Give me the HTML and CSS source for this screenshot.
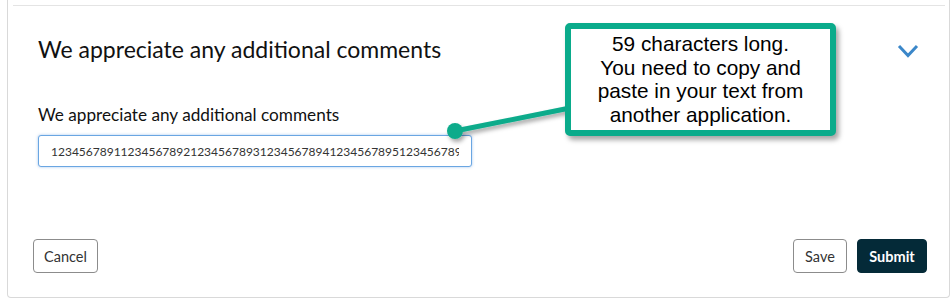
FILE: index.html
```html
<!DOCTYPE html>
<html lang="en">
<head>
<meta charset="utf-8">
<title>Comments</title>
<link rel="stylesheet" href="styles.css">
</head>
<body>
<div class="card">
  <div class="divider"></div>
  <div class="section">
    <div class="head">
      <h2 class="title">We appreciate any additional comments</h2>
      <svg class="chevron" width="22" height="16" viewBox="0 0 22 16" aria-hidden="true"><path d="M2 3 L11 12.5 L20 3" fill="none" stroke="#3b87c9" stroke-width="3"/></svg>
    </div>
    <label class="label" for="comments">We appreciate any additional comments</label>
    <input class="field" id="comments" type="text" value="12345678911234567892123456789312345678941234567895123456789">
  </div>
  <div class="actions">
    <button class="btn cancel">Cancel</button>
    <div class="group">
      <button class="btn save">Save</button>
      <button class="btn primary">Submit</button>
    </div>
  </div>
</div>
<svg class="connector" width="952" height="304" viewBox="0 0 952 304" aria-hidden="true">
  <defs>
    <filter id="sh" x="-20%" y="-50%" width="140%" height="200%">
      <feDropShadow dx="2" dy="3" stdDeviation="2" flood-color="#000" flood-opacity="0.35"/>
    </filter>
  </defs>
  <g filter="url(#sh)">
    <line x1="455" y1="131" x2="570" y2="108" stroke="#0aab8b" stroke-width="5"/>
    <circle cx="455" cy="131" r="8" fill="#0aab8b"/>
  </g>
</svg>
<div class="callout">59 characters long.<br>You need to copy and<br>paste in your text from<br>another application.</div>
</body>
</html>
```
FILE: styles.css
```css
html, body { margin: 0; padding: 0; background: #fff; }
body { width: 952px; height: 304px; overflow: hidden; position: relative; font-family: "Lato", "Noto Sans", sans-serif; color: #1a1a1a; }

.card {
  margin-left: 7px;
  width: 941px;
  height: 297px;
  border: 1px solid #d9d9d9;
  border-top: none;
  border-radius: 0 0 4px 4px;
  display: flex;
  flex-direction: column;
  box-sizing: content-box;
}
.divider { margin: 5px 4px 0 5px; border-top: 1px solid #e4e4e4; }
.section { padding: 0 0 0 30px; }
.head { display: flex; align-items: center; justify-content: space-between; padding: 28px 30px 0 0; height: 30px; }
.title { margin: 0; font-weight: 400; font-size: 23px; color: #111; letter-spacing: 0; }
.chevron { display: block; margin-top: 4px; }
.label { display: block; margin-top: 40px; font-size: 17.2px; color: #111; }
.field {
  display: block;
  margin-top: 10px;
  width: 434px;
  height: 32px;
  box-sizing: border-box;
  border: 1px solid #6aa6e2;
  border-radius: 3px;
  box-shadow: 0 0 3px rgba(90, 150, 220, 0.55);
  padding: 0 12px 0 12px;
  font-family: "Lato", sans-serif;
  font-size: 12px;
  color: #333;
  outline: none;
}
.actions { margin-top: auto; display: flex; justify-content: space-between; padding: 0 22px 24px 25px; }
.group { display: flex; gap: 10px; }
.btn {
  height: 34px;
  padding: 0;
  border: 1px solid #8c8c8c;
  border-radius: 4px;
  background: #fff;
  font-family: "Lato", sans-serif;
  font-size: 14.5px;
  color: #333;
}
.cancel { width: 65px; }
.save { width: 54px; }
.btn.primary { width: 70px; background: #042a38; border-color: #042a38; color: #fff; font-weight: 700; }

.connector { position: absolute; left: 0; top: 0; pointer-events: none; }
.callout {
  position: absolute;
  left: 565px;
  top: 23px;
  width: 271px;
  height: 113px;
  box-sizing: border-box;
  border: 6px solid #0aab8b;
  border-radius: 5px;
  background: #fff;
  box-shadow: 3px 4px 5px rgba(0, 0, 0, 0.35);
  font-family: "Liberation Sans", Arial, sans-serif;
  font-size: 20.8px;
  line-height: 23.5px;
  color: #000;
  text-align: center;
  padding-top: 3px;
}
```
